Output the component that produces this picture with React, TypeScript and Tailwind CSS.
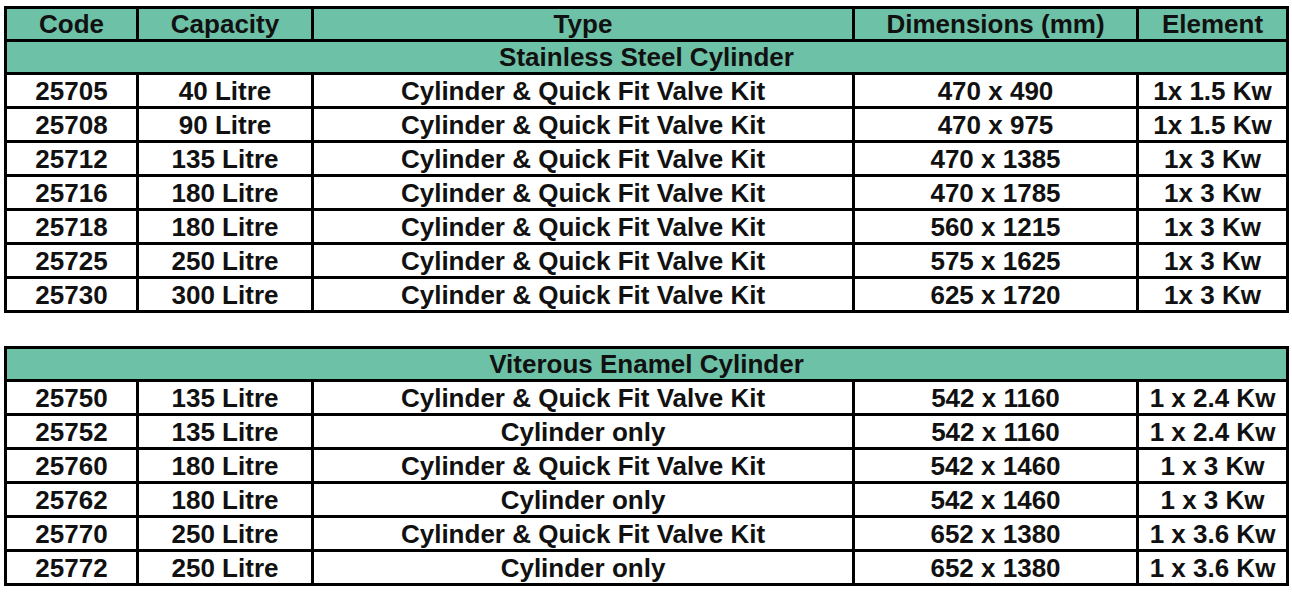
const headers = ['Code', 'Capacity', 'Type', 'Dimensions (mm)', 'Element']

type Row = [string, string, string, string, string]

const stainless: Row[] = [
    ['25705', '40 Litre', 'Cylinder & Quick Fit Valve Kit', '470 x 490', '1x 1.5 Kw'],
    ['25708', '90 Litre', 'Cylinder & Quick Fit Valve Kit', '470 x 975', '1x 1.5 Kw'],
    ['25712', '135 Litre', 'Cylinder & Quick Fit Valve Kit', '470 x 1385', '1x 3 Kw'],
    ['25716', '180 Litre', 'Cylinder & Quick Fit Valve Kit', '470 x 1785', '1x 3 Kw'],
    ['25718', '180 Litre', 'Cylinder & Quick Fit Valve Kit', '560 x 1215', '1x 3 Kw'],
    ['25725', '250 Litre', 'Cylinder & Quick Fit Valve Kit', '575 x 1625', '1x 3 Kw'],
    ['25730', '300 Litre', 'Cylinder & Quick Fit Valve Kit', '625 x 1720', '1x 3 Kw'],
]

const enamel: Row[] = [
    ['25750', '135 Litre', 'Cylinder & Quick Fit Valve Kit', '542 x 1160', '1 x 2.4 Kw'],
    ['25752', '135 Litre', 'Cylinder only', '542 x 1160', '1 x 2.4 Kw'],
    ['25760', '180 Litre', 'Cylinder & Quick Fit Valve Kit', '542 x 1460', '1 x 3 Kw'],
    ['25762', '180 Litre', 'Cylinder only', '542 x 1460', '1 x 3 Kw'],
    ['25770', '250 Litre', 'Cylinder & Quick Fit Valve Kit', '652 x 1380', '1 x 3.6 Kw'],
    ['25772', '250 Litre', 'Cylinder only', '652 x 1380', '1 x 3.6 Kw'],
]

const gridCols = 'grid grid-cols-[129px_172px_538px_281px_147px] gap-[3px] bg-black p-[3px] w-[1285px]'

function Cell({ children, teal = false, tall = false }: { children: React.ReactNode; teal?: boolean; tall?: boolean }) {
    return (
        <div
            className={`flex items-center justify-center whitespace-nowrap leading-none ${tall ? 'h-[30px]' : 'h-[31px]'} ${teal ? 'bg-[#6dc1a6]' : 'bg-white'}`}
        >
            {children}
        </div>
    )
}

function Section({ title, rows, withHeader }: { title: string; rows: Row[]; withHeader?: boolean }) {
    return (
        <div className={gridCols}>
            {withHeader &&
                headers.map((h) => (
                    <Cell key={h} teal tall>
                        {h}
                    </Cell>
                ))}
            <div className="col-span-5 flex h-[30px] items-center justify-center bg-[#6dc1a6] leading-none">
                {title}
            </div>
            {rows.map((r) =>
                r.map((v, i) => <Cell key={r[0] + i}>{v}</Cell>),
            )}
        </div>
    )
}

export default function App() {
    return (
        <div
            className="min-h-[592px] bg-white pl-[4px] pt-[6px] text-[26px] font-bold text-[#111]"
            style={{ fontFamily: '"Liberation Sans", Arial, sans-serif' }}
        >
            <Section title="Stainless Steel Cylinder" rows={stainless} withHeader />
            <div className="mt-[33px]">
                <Section title="Viterous Enamel Cylinder" rows={enamel} />
            </div>
        </div>
    )
}
